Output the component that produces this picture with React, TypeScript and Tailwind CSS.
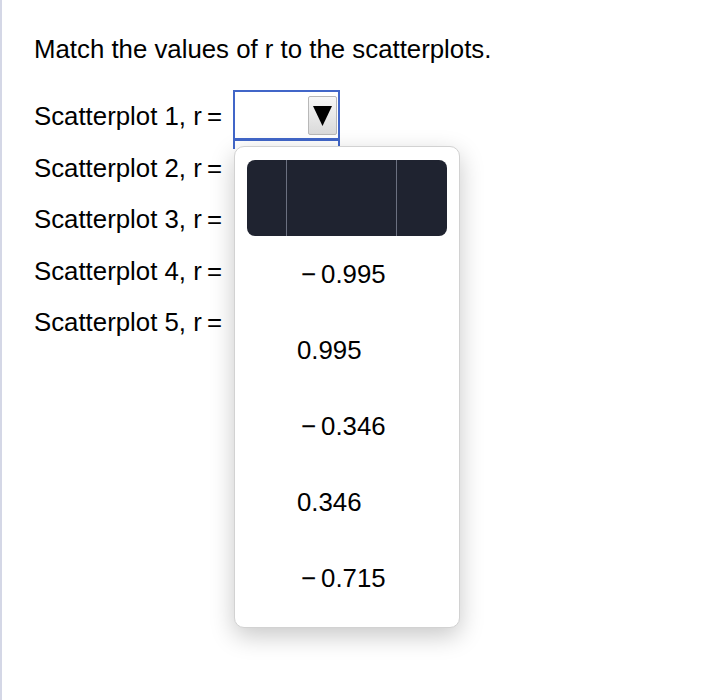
import React from 'react';

const rows = [1, 2, 3, 4, 5];

const options: { neg: boolean; value: string }[] = [
  { neg: true, value: '0.995' },
  { neg: false, value: '0.995' },
  { neg: true, value: '0.346' },
  { neg: false, value: '0.346' },
  { neg: true, value: '0.715' },
];

function SelectBox({ open }: { open?: boolean }) {
  if (!open) {
    return <div className="h-full w-[107px] bg-white" />;
  }
  return (
    <div className="relative h-full w-[107px]">
      <div className="flex h-[51px] items-start justify-end border-2 border-b-[3px] border-[#4166c8] bg-white pr-[1px] pt-[4px]">
        <div className="flex h-[39px] w-[29px] items-center justify-center rounded-[2px] border border-[#b8b8b8] bg-gradient-to-b from-[#f7f7f7] to-[#dadada]">
          <svg width="19" height="20" viewBox="0 0 19 20">
            <polygon points="0,0 19,0 9.5,20" fill="#000" />
          </svg>
        </div>
      </div>
      {/* continuation of the focused outline, mostly hidden by the list */}
      <div className="h-[8px] border-x-2 border-[#4166c8]" />
    </div>
  );
}

export default function App() {
  return (
    <div
      className="relative min-h-[700px] border-l-2 border-[#d4d7e6] bg-white pl-[32px] text-black"
      style={{ fontFamily: '"Liberation Sans", Arial, sans-serif' }}
    >
      <h1 className="pt-[34px] text-[25.8px] font-normal leading-[30px]">
        Match the values of r to the scatterplots.
      </h1>

      <div className="mt-[26px] flex flex-col">
        {rows.map((n) => (
          <div key={n} className="flex h-[51.5px] items-start">
            <div className="w-[199px] pt-[11px] text-[25.8px] leading-[30px]">
              Scatterplot {n}, r{'\u2009'}=
            </div>
            <SelectBox open={n === 1} />
          </div>
        ))}
      </div>

      {/* open dropdown list */}
      <div className="absolute left-[232px] top-[146px] w-[226px] rounded-[10px] border border-[#d2d2d2] bg-white px-[12px] pb-[11px] pt-[13px] shadow-[0_8px_24px_rgba(0,0,0,0.22)]">
        <div className="grid h-[76px] grid-cols-[40px_110px_50px] overflow-hidden rounded-[8px] bg-[#1f2330]">
          <div className="border-r border-[#6b7080]" />
          <div className="border-r border-[#6b7080]" />
          <div />
        </div>
        {options.map((o, i) => (
          <div key={i} className="grid h-[76px] grid-cols-[40px_110px_50px] items-center">
            <div />
            <div className="whitespace-nowrap pl-[10px] text-[25.8px] leading-[30px]">
              {o.neg ? (
                <>
                  <span className="ml-[4px]">{'\u2212'}</span>
                  <span className="ml-[5px]">{o.value}</span>
                </>
              ) : (
                <span>{o.value}</span>
              )}
            </div>
            <div />
          </div>
        ))}
      </div>
    </div>
  );
}
